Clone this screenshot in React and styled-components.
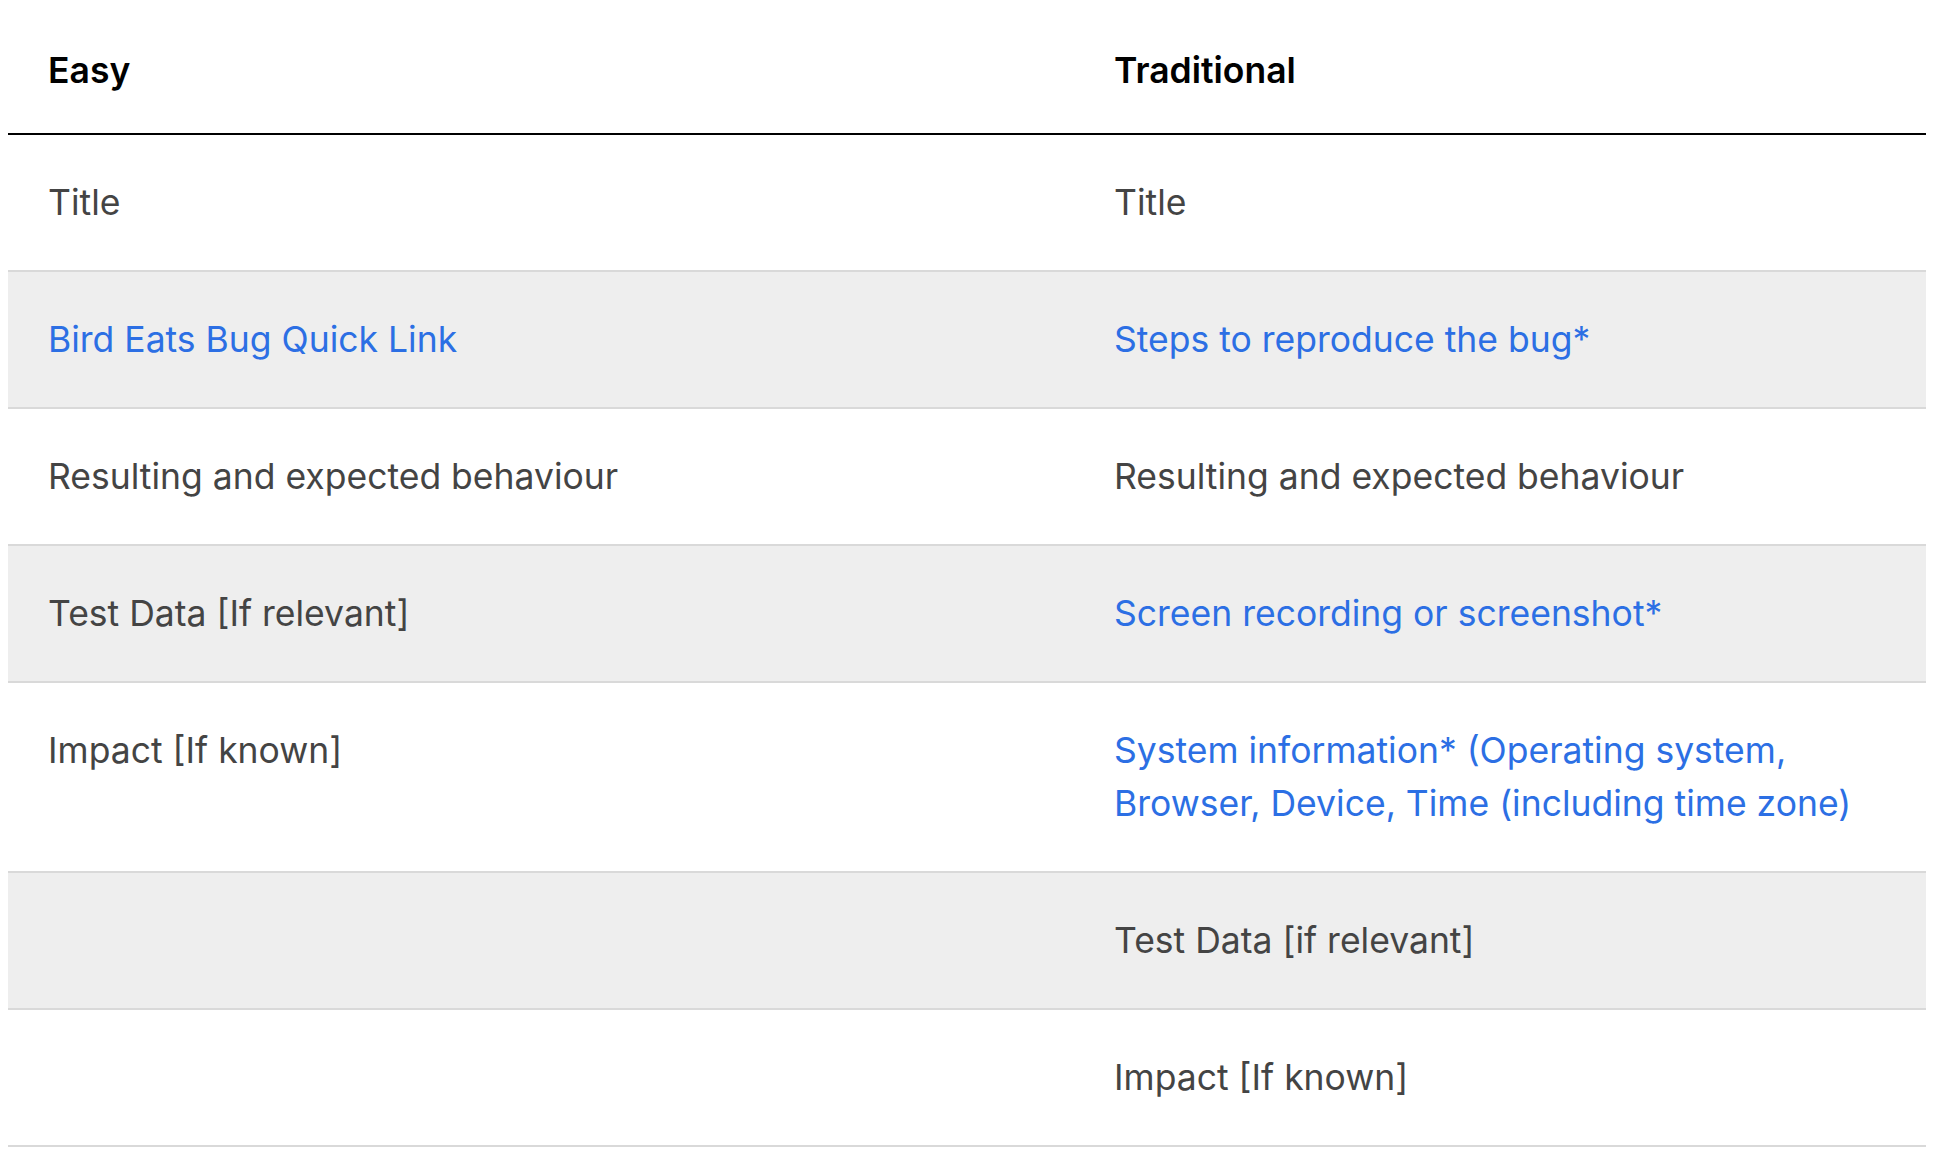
import React from "react";
import styled, { createGlobalStyle } from "styled-components";

const Global = createGlobalStyle`
  body { margin: 8px; background: #fff; font-family: Inter, "Noto Sans", sans-serif; }
`;

const Table = styled.table`
  width: 1918px;
  border-collapse: collapse;
  table-layout: fixed;
  font-size: 35.5px;
  line-height: 53px;
`;

const Th = styled.th`
  text-align: left;
  font-weight: 600;
  color: #000;
  padding: 36px 40px 36px;
  border-bottom: 2px solid #000;
  width: ${(p) => p.$w || "auto"};
`;

const Row = styled.tr`
  background: ${(p) => (p.$alt ? "#eeeeee" : "#fff")};
  border-bottom: 2px solid #d9d9d9;
`;

const Td = styled.td`
  padding: 41px 40px;
  vertical-align: top;
  color: ${(p) => (p.$link ? "#2c6fe4" : "#444")};
`;

const rows = [
  [["Title"], ["Title"]],
  [["Bird Eats Bug Quick Link", 1], ["Steps to reproduce the bug*", 1]],
  [["Resulting and expected behaviour"], ["Resulting and expected behaviour"]],
  [["Test Data [If relevant]"], ["Screen recording or screenshot*", 1]],
  [["Impact [If known]"], ["System information* (Operating system, Browser, Device, Time (including time zone)", 1]],
  [[""], ["Test Data [if relevant]"]],
  [[""], ["Impact [If known]"]],
];

export default function App() {
  return (
    <>
      <Global />
      <Table>
        <thead>
          <tr>
            <Th $w="986px">Easy</Th>
            <Th>Traditional</Th>
          </tr>
        </thead>
        <tbody>
          {rows.map((r, i) => (
            <Row key={i} $alt={i % 2 === 1}>
              {r.map(([t, l], j) => (
                <Td key={j} $link={!!l}>{t}</Td>
              ))}
            </Row>
          ))}
        </tbody>
      </Table>
    </>
  );
}
